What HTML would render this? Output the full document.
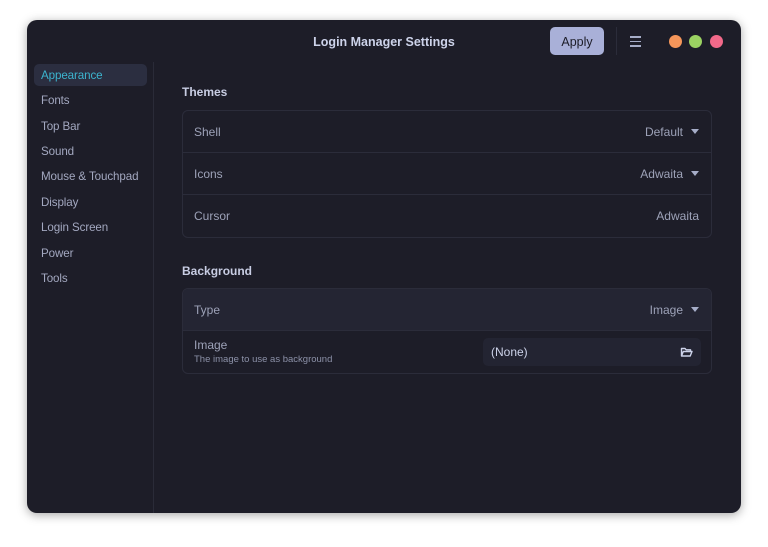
<!DOCTYPE html>
<html><head><style>
*{box-sizing:border-box;margin:0;padding:0}
body{width:768px;height:547px;background:#fff;font-family:"Liberation Sans","DejaVu Sans",sans-serif;position:relative;overflow:hidden}
.win{position:absolute;left:27px;top:20px;width:714px;height:493px;background:#1d1d28;border-radius:10px;box-shadow:0 2px 10px rgba(0,0,0,.35);overflow:hidden}
.title{position:absolute;left:0;right:0;top:15px;text-align:center;color:#cdd3ea;font-size:12.5px;font-weight:bold}
.apply{position:absolute;left:523px;top:7px;width:54px;height:28px;background:#a9b0d8;border-radius:5px;color:#1d1d28;font-size:12.5px;text-align:center;line-height:30px}
.sep{position:absolute;left:589px;top:7px;width:1px;height:28px;background:#2b2c3a}
.menu{position:absolute;left:603px;top:16px;width:11px}
.menu i{display:block;height:1.5px;background:#a6adc8;margin-bottom:3px}
.dot{position:absolute;top:15px;width:13px;height:13px;border-radius:50%}
.side{position:absolute;left:0;top:42px;width:127px;bottom:0;border-right:1px solid #2a2b38}
.it{position:absolute;left:14px;font-size:11.6px;color:#a3a8c0;letter-spacing:-0.1px}
.sel{position:absolute;left:7px;top:2px;width:113px;height:22px;background:#2b2e40;border-radius:5px}
.h{position:absolute;left:155px;font-size:12px;font-weight:bold;color:#c8cde3}
.box{position:absolute;left:155px;width:530px;border:1px solid #2b2c3a;border-radius:6px;overflow:hidden}
.row{height:42px;position:relative;border-bottom:1px solid #2b2c3a;font-size:12px;color:#9da2b8}
.row:last-child{border-bottom:none}
.row .l{position:absolute;left:11px;top:14px}
.row .r{position:absolute;right:12px;top:14px}
.tri{display:inline-block;width:0;height:0;border-left:4.5px solid transparent;border-right:4.5px solid transparent;border-top:5px solid #a6adc8;margin-left:8px;vertical-align:2px}
</style></head><body>
<div class="win">
<div class="title">Login Manager Settings</div>
<div class="apply">Apply</div>
<div class="sep"></div>
<div class="menu"><i></i><i></i><i></i></div>
<div class="dot" style="left:642px;background:#f5965a"></div>
<div class="dot" style="left:662px;background:#9bd262"></div>
<div class="dot" style="left:683px;background:#f2698a"></div>
<div class="side">
<div class="sel"></div>
<div class="it" style="top:7px;color:#3cb5cf">Appearance</div>
<div class="it" style="top:32px">Fonts</div>
<div class="it" style="top:58px">Top Bar</div>
<div class="it" style="top:83px">Sound</div>
<div class="it" style="top:108px">Mouse &amp; Touchpad</div>
<div class="it" style="top:134px">Display</div>
<div class="it" style="top:159px">Login Screen</div>
<div class="it" style="top:185px">Power</div>
<div class="it" style="top:210px">Tools</div>
</div>
<div class="h" style="top:65px">Themes</div>
<div class="box" style="top:90px">
<div class="row"><span class="l">Shell</span><span class="r">Default<span class="tri"></span></span></div>
<div class="row"><span class="l">Icons</span><span class="r">Adwaita<span class="tri"></span></span></div>
<div class="row"><span class="l">Cursor</span><span class="r">Adwaita</span></div>
</div>
<div class="h" style="top:244px">Background</div>
<div class="box" style="top:268px">
<div class="row" style="background:#242533"><span class="l">Type</span><span class="r">Image<span class="tri"></span></span></div>
<div class="row" style="height:42px">
<span style="position:absolute;left:11px;top:7px">Image</span>
<span style="position:absolute;left:11px;top:23px;font-size:9.5px;color:#8c91a8">The image to use as background</span>
<div style="position:absolute;left:300px;top:7px;width:218px;height:28px;background:#232432;border-radius:5px">
<span style="position:absolute;left:8px;top:7px;color:#cdd3ea">(None)</span>
<svg style="position:absolute;right:8px;top:8px" width="13" height="12" viewBox="0 0 13 12"><path d="M1.5 10V2.5h3.5l1.2 1.3H10.5V5.5M1.5 10L3.3 5.5H12L10.2 10Z" fill="none" stroke="#cdd3ea" stroke-width="1.4" stroke-linejoin="round"/></svg>
</div>
</div>
</div>
</div>
</body></html>
